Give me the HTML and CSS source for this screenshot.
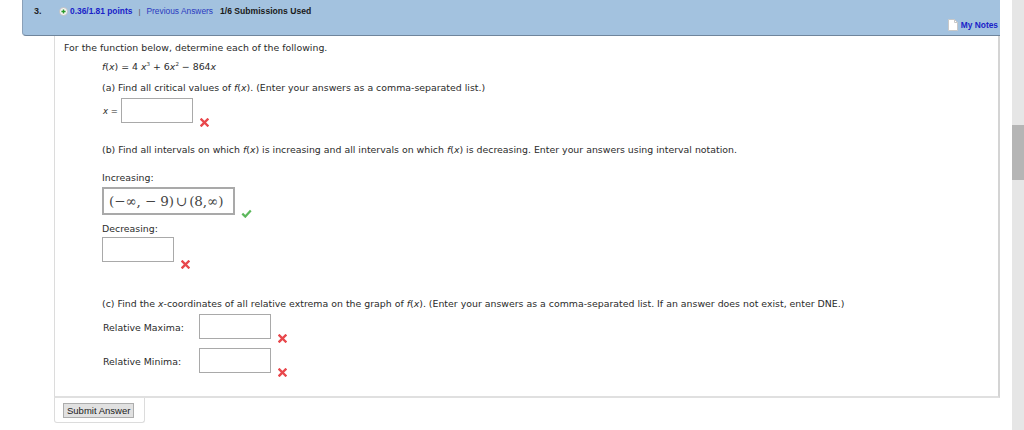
FILE: index.html
```html
<!DOCTYPE html>
<html>
<head>
<meta charset="utf-8">
<link rel="stylesheet" href="styles.css">
</head>
<body>
<div class="page">
  <div class="main">
    <div class="qhead">
      <div class="qrow">
        <span class="qnum">3.</span>
        <svg class="plus" width="9" height="9" viewBox="0 0 9 9"><circle cx="4.5" cy="4.5" r="4" fill="#f4f4f4" stroke="#b8b8b8" stroke-width="0.8"/><path d="M4.5 2.4v4.2M2.4 4.5h4.2" stroke="#2a9a2a" stroke-width="1.4"/></svg>
        <span class="pts">0.36/1.81 points</span>
        <span class="sep">|</span>
        <span class="prev">Previous Answers</span>
        <span class="subs">1/6 Submissions Used</span>
      </div>
      <div class="notes">
        <svg class="noteicon" width="10" height="12" viewBox="0 0 10 12"><path d="M0.5 0.5h6l3 3v8h-9z" fill="#fff" stroke="#c8c8c8"/><path d="M6.5 0.5v3h3" fill="none" stroke="#c8c8c8"/></svg>
        <span>My Notes</span>
      </div>
    </div>
    <div class="qbody">
      <p class="intro">For the function below, determine each of the following.</p>
      <div class="indent">
        <p class="func"><i>f</i>(<i>x</i>) = 4 <i>x</i><sup>3</sup> + 6<i>x</i><sup>2</sup> &minus; 864<i>x</i></p>
        <p class="part">(a) Find all critical values of <i>f</i>(<i>x</i>). (Enter your answers as a comma-separated list.)</p>
        <div class="ansrow a-row">
          <span class="xeq"><i>x</i> =</span>
          <span class="box small"></span>
          <svg class="mark cross" width="9" height="9" viewBox="0 0 9 9"><path d="M1.5 1.5l6 6M7.5 1.5l-6 6" stroke="#e8474c" stroke-width="2.4" stroke-linecap="square"/></svg>
        </div>
        <p class="part b-part">(b) Find all intervals on which <i>f</i>(<i>x</i>) is increasing and all intervals on which <i>f</i>(<i>x</i>) is decreasing. Enter your answers using interval notation.</p>
        <p class="lbl inc-lbl">Increasing:</p>
        <div class="ansrow">
          <span class="box mathbox">(&minus;&infin;, &minus; 9)<span class="cup">&cup;</span>(8,&infin;)</span>
          <svg class="mark check" width="11" height="9" viewBox="0 0 11 9"><path d="M1.3 4.6l3 3L9.8 1.6" fill="none" stroke="#5cb85c" stroke-width="2.2"/></svg>
        </div>
        <p class="lbl dec-lbl">Decreasing:</p>
        <div class="ansrow">
          <span class="box small dec"></span>
          <svg class="mark cross" width="9" height="9" viewBox="0 0 9 9"><path d="M1.5 1.5l6 6M7.5 1.5l-6 6" stroke="#e8474c" stroke-width="2.4" stroke-linecap="square"/></svg>
        </div>
        <p class="part c-part">(c) Find the <i>x</i>-coordinates of all relative extrema on the graph of <i>f</i>(<i>x</i>). (Enter your answers as a comma-separated list. If an answer does not exist, enter DNE.)</p>
        <div class="ansrow ext max">
          <span class="extlbl">Relative Maxima:</span>
          <span class="box small"></span>
          <svg class="mark cross" width="9" height="9" viewBox="0 0 9 9"><path d="M1.5 1.5l6 6M7.5 1.5l-6 6" stroke="#e8474c" stroke-width="2.4" stroke-linecap="square"/></svg>
        </div>
        <div class="ansrow ext min">
          <span class="extlbl">Relative Minima:</span>
          <span class="box small"></span>
          <svg class="mark cross" width="9" height="9" viewBox="0 0 9 9"><path d="M1.5 1.5l6 6M7.5 1.5l-6 6" stroke="#e8474c" stroke-width="2.4" stroke-linecap="square"/></svg>
        </div>
      </div>
    </div>
    <div class="submittab">
      <button class="submit">Submit Answer</button>
    </div>
  </div>
  <div class="scrollbar"><div class="thumb"></div></div>
</div>
</body>
</html>
```
FILE: styles.css
```css
html, body {
  margin: 0;
  padding: 0;
  background: #fff;
}
.page {
  display: flex;
  width: 1024px;
  height: 430px;
  overflow: hidden;
}
.main {
  flex: 1;
  padding-left: 22px;
  padding-right: 12px;
}
.scrollbar {
  width: 12px;
  background: #e6e6e6;
}
.thumb {
  margin-top: 125px;
  height: 55px;
  background: #b5b5b5;
}
.qhead {
  height: 35px;
  background: #a3c2df;
  border-bottom: 1px solid #6f859c;
  border-left: 1px solid #8aa0b8;
  border-bottom-left-radius: 4px;
  display: flex;
  flex-direction: column;
  justify-content: space-between;
  font-family: "Liberation Sans", Arial, sans-serif;
  font-size: 8px;
  font-weight: bold;
}
.qrow {
  display: flex;
  align-items: center;
  height: 10px;
  margin-top: 6px;
  padding-left: 11px;
  color: #222;
}
.qnum { width: 25px; font-size: 9px; }
.plus { margin-right: 2px; }
.pts { color: #1a22c8; font-size: 8.4px; }
.sep { color: #555; font-weight: normal; margin: 0 6px; }
.prev { color: #2a3ac0; font-weight: normal; margin-right: 7px; font-size: 8.4px; }
.subs { color: #1a1a1a; font-size: 8.6px; }
.notes {
  align-self: flex-end;
  display: flex;
  align-items: center;
  margin-bottom: 4px;
  margin-right: 2px;
  color: #1a22c8;
  font-size: 8.4px;
}
.noteicon { margin-right: 3px; }
.qbody {
  margin-left: 32px;
  border-left: 1px solid #dcdcdc;
  border-right: 2px solid #d4d4d4;
  border-bottom: 2px solid #e0e0e0;
  height: 362px;
  box-sizing: border-box;
  padding-left: 9px;
  padding-top: 6px;
  font-family: "DejaVu Sans", Verdana, sans-serif;
  font-size: 9.4px;
  color: #2b2b2b;
  line-height: 12px;
}
p { margin: 0; }
.indent { padding-left: 38px; }
.func { margin-top: 7px; }
.func sup { font-size: 5.5px; vertical-align: 4px; line-height: 0; }
.part { margin-top: 9px; }
.ansrow {
  display: flex;
  align-items: flex-start;
}
.a-row { margin-top: 4px; padding-left: 1px; }
.xeq { width: 18px; margin-top: 7px; font-size: 8.5px; }
.box {
  display: block;
  box-sizing: border-box;
  border: 1px solid #a9a9a9;
  background: #fff;
}
.small { width: 72px; height: 25px; }
.mark { margin-left: 7px; }
.a-row .cross { margin-top: 20px; }
.b-part { margin-top: 17px; }
.lbl { margin-top: 16px; padding-left: 0; }
.inc-lbl + .ansrow { margin-top: 3px; }
.mathbox {
  width: 133px;
  height: 28px;
  border: 2px solid #a9a9a9;
  font-family: "DejaVu Serif", "Liberation Serif", serif;
  font-size: 13.5px;
  color: #444;
  line-height: 24px;
  padding-left: 5px;
  white-space: nowrap;
  letter-spacing: -0.1px;
}
.cup { margin: 0 2px; }
.check { margin-top: 22px; margin-left: 6px; }
.dec-lbl { margin-top: 5px; }
.dec-lbl + .ansrow { margin-top: 2px; }
.dec + .cross { margin-top: 23px; }
.c-part { margin-top: 29px; }
.ext { margin-top: 4px; }
.ext.min { margin-top: 5px; }
.extlbl { width: 96px; padding-left: 1px; margin-top: 8px; }
.ext .cross { margin-top: 20px; }
.submittab {
  margin-left: 32px;
  width: 91px;
  height: 25px;
  box-sizing: border-box;
  border: 1px solid #dcdcdc;
  border-top: none;
  border-radius: 0 0 3px 3px;
  padding-top: 5px;
  padding-left: 8px;
}
.submit {
  display: block;
  font-family: "Liberation Sans", Arial, sans-serif;
  font-size: 9.5px;
  color: #222;
  background: #e1e1e1;
  border: 1px solid #adadad;
  padding: 0 3px;
  height: 15px;
  line-height: 13px;
}
```
